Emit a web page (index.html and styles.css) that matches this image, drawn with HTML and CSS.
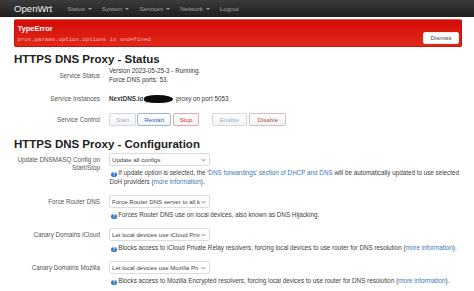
FILE: index.html
```html
<!DOCTYPE html>
<html lang="en">
<head>
<meta charset="utf-8">
<title>HTTPS DNS Proxy</title>
<link rel="stylesheet" href="styles.css">
</head>
<body>
<header class="navbar">
  <span class="brand">OpenWrt</span>
  <nav class="nav">
    <span class="nav-item">Status<i class="caret"></i></span>
    <span class="nav-item">System<i class="caret"></i></span>
    <span class="nav-item">Services<i class="caret"></i></span>
    <span class="nav-item">Network<i class="caret"></i></span>
    <span class="nav-item">Logout</span>
  </nav>
</header>
<main class="container">
  <div class="alert">
    <div class="alert-body">
      <div class="alert-title">TypeError</div>
      <div class="alert-msg">prov.params.option.options is undefined</div>
    </div>
    <button class="btn-dismiss">Dismiss</button>
  </div>

  <h2 class="section-title">HTTPS DNS Proxy - Status</h2>
  <div class="row row-status">
    <div class="label">Service Status</div>
    <div class="value">Version 2023-05-25-3 - Running.<br>Force DNS ports: 53.</div>
  </div>
  <div class="row row-instances">
    <div class="label">Service Instances</div>
    <div class="value"><b>NextDNS.io</b> (<span class="redact"></span> proxy on port 5053.</div>
  </div>
  <div class="row row-control">
    <div class="label">Service Control</div>
    <div class="value buttons">
      <span class="btn btn-muted">Start</span>
      <span class="btn btn-blue">Restart</span>
      <span class="btn btn-red">Stop</span>
      <span class="btn btn-muted btn-wide btn-sep">Enable</span>
      <span class="btn btn-red-muted btn-wide">Disable</span>
    </div>
  </div>

  <h2 class="section-title title-config">HTTPS DNS Proxy - Configuration</h2>
  <div class="row cfg">
    <div class="label cfg-label">Update DNSMASQ Config on Start/Stop</div>
    <div class="field">
      <div class="select"><span class="select-text">Update all configs</span><svg class="chev" viewBox="0 0 8 5" width="5" height="4"><path d="M1 1 L4 4 L7 1" fill="none" stroke="#666" stroke-width="1.3"/></svg></div>
      <div class="help"><span class="qicon">?</span> If update option is selected, the <a>'DNS forwardings' section of DHCP and DNS</a> will be automatically updated to use selected<br>DoH providers (<a>more information</a>).</div>
    </div>
  </div>
  <div class="row cfg">
    <div class="label cfg-label">Force Router DNS</div>
    <div class="field">
      <div class="select"><span class="select-text">Force Router DNS server to all k</span><svg class="chev" viewBox="0 0 8 5" width="5" height="4"><path d="M1 1 L4 4 L7 1" fill="none" stroke="#666" stroke-width="1.3"/></svg></div>
      <div class="help"><span class="qicon">?</span> Forces Router DNS use on local devices, also known as DNS Hijacking.</div>
    </div>
  </div>
  <div class="row cfg">
    <div class="label cfg-label">Canary Domains iCloud</div>
    <div class="field">
      <div class="select"><span class="select-text">Let local devices use iCloud Priv</span><svg class="chev" viewBox="0 0 8 5" width="5" height="4"><path d="M1 1 L4 4 L7 1" fill="none" stroke="#666" stroke-width="1.3"/></svg></div>
      <div class="help"><span class="qicon">?</span> Blocks access to iCloud Private Relay resolvers, forcing local devices to use router for DNS resolution (<a>more information</a>).</div>
    </div>
  </div>
  <div class="row cfg">
    <div class="label cfg-label">Canary Domains Mozilla</div>
    <div class="field">
      <div class="select"><span class="select-text">Let local devices use Mozilla Pri</span><svg class="chev" viewBox="0 0 8 5" width="5" height="4"><path d="M1 1 L4 4 L7 1" fill="none" stroke="#666" stroke-width="1.3"/></svg></div>
      <div class="help"><span class="qicon">?</span> Blocks access to Mozilla Encrypted resolvers, forcing local devices to use router for DNS resolution (<a>more information</a>).</div>
    </div>
  </div>
</main>
</body>
</html>
```
FILE: styles.css
```css
* { box-sizing: border-box; }
html, body { margin: 0; padding: 0; background: #fff; }
body {
  font-family: "Liberation Sans", Arial, sans-serif;
  font-size: 6.3px;
  color: #404040;
  width: 474px;
  height: 291px;
  overflow: hidden;
}

.navbar {
  height: 17px;
  background: linear-gradient(#3b3b3b, #1f1f1f);
  display: flex;
  align-items: center;
  padding-left: 14px;
}
.brand {
  color: #f2f2f2;
  font-size: 9.6px;
  margin-right: 15px;
}
.nav { display: flex; gap: 10px; }
.nav-item { color: #a0a0a0; font-size: 6.2px; display: inline-flex; align-items: center; }
.caret {
  display: inline-block;
  width: 0; height: 0;
  margin-left: 3px;
  border-top: 2.4px solid #a0a0a0;
  border-left: 2px solid transparent;
  border-right: 2px solid transparent;
}

.container { padding: 0 12px 0 14px; }

.alert {
  margin-top: 2px;
  height: 28px;
  background: linear-gradient(#d40c06, #e1281a);
  border: 1px solid #c80f08;
  border-top-color: #e85a4c;
  border-radius: 2px;
  display: flex;
  justify-content: space-between;
  align-items: flex-end;
  padding: 4px 2px 2.5px 2.5px;
}
.alert-body { align-self: flex-start; }
.alert-title {
  font-weight: bold;
  font-size: 7.5px;
  line-height: 10px;
  color: #fff;
}
.alert-msg {
  font-family: "Liberation Mono", monospace;
  font-size: 5.7px;
  line-height: 9px;
  margin-top: 1px;
  color: #f7b9a8;
}
.btn-dismiss {
  font-family: "Liberation Sans", Arial, sans-serif;
  font-size: 6px;
  color: #444;
  background: #fff;
  border: 1px solid #eee;
  border-radius: 2px;
  height: 12px;
  width: 36px;
  padding: 0;
  line-height: 10px;
}

.section-title {
  font-size: 11.5px;
  line-height: 14px;
  font-weight: bold;
  color: #222;
  margin: 5px 0 0;
}
.title-config { margin-top: 11px; }

.row {
  display: grid;
  grid-template-columns: 86px 1fr;
  column-gap: 9px;
  align-items: center;
}
.label { text-align: right; color: #555; }
.value { color: #383838; }

.row-status { margin-top: 1px; line-height: 8.5px; }
.row-status .label { padding-top: 1px; }
.row-instances { margin-top: 9px; line-height: 12px; }
.row-control { margin-top: 8px; }

.redact {
  display: inline-block;
  width: 29px;
  height: 8px;
  background: #0d0d0d;
  border-radius: 45% 55% 50% 40%;
  vertical-align: middle;
  margin-left: -3px;
  margin-right: 1px;
}

.buttons { display: flex; align-items: center; }
.btn {
  display: inline-flex;
  align-items: center;
  height: 13px;
  padding: 0 6px;
  border: 1px solid #c9d3de;
  border-radius: 2px;
  background: linear-gradient(#ffffff, #f3f3f3);
  margin-right: 1.3px;
  font-size: 6.2px;
}
.btn-wide { padding: 0 7px; margin-right: 2.5px; }
.btn-sep { margin-left: 11px; }
.btn-muted { color: #9ab3cc; border-color: #cfd8e2; }
.btn-blue { color: #2f6db0; border-color: #9fb6d0; }
.btn-red { color: #c83a33; border-color: #dfaaa8; }
.btn-red-muted { color: #b35a5a; border-color: #d9bcbc; }

.cfg { align-items: start; margin-top: 9px; }
.title-config + .cfg { margin-top: 2px; }
.cfg-label { padding-top: 2.5px; line-height: 8px; }
.field { min-width: 0; }
.select {
  width: 101px;
  height: 13px;
  border: 1px solid #dcdcdc;
  border-radius: 2px;
  background: #fff;
  display: flex;
  align-items: center;
  padding: 0 3px 0 2px;
  color: #444;
}
.select-text {
  flex: 1;
  white-space: nowrap;
  font-size: 6.1px;
}
.chev { flex: none; margin-left: 1px; }

.help {
  margin-top: 2px;
  line-height: 9px;
  color: #404040;
  white-space: nowrap;
  margin-left: 0.5px;
}
.help a { color: #3a78b8; }
.qicon {
  display: inline-block;
  width: 5.5px;
  height: 5.5px;
  border-radius: 50%;
  background: #2f79c0;
  color: #fff;
  font-size: 4.5px;
  line-height: 5.5px;
  text-align: center;
  font-weight: bold;
  vertical-align: -0.5px;
  margin-left: 1.5px;
}
```
